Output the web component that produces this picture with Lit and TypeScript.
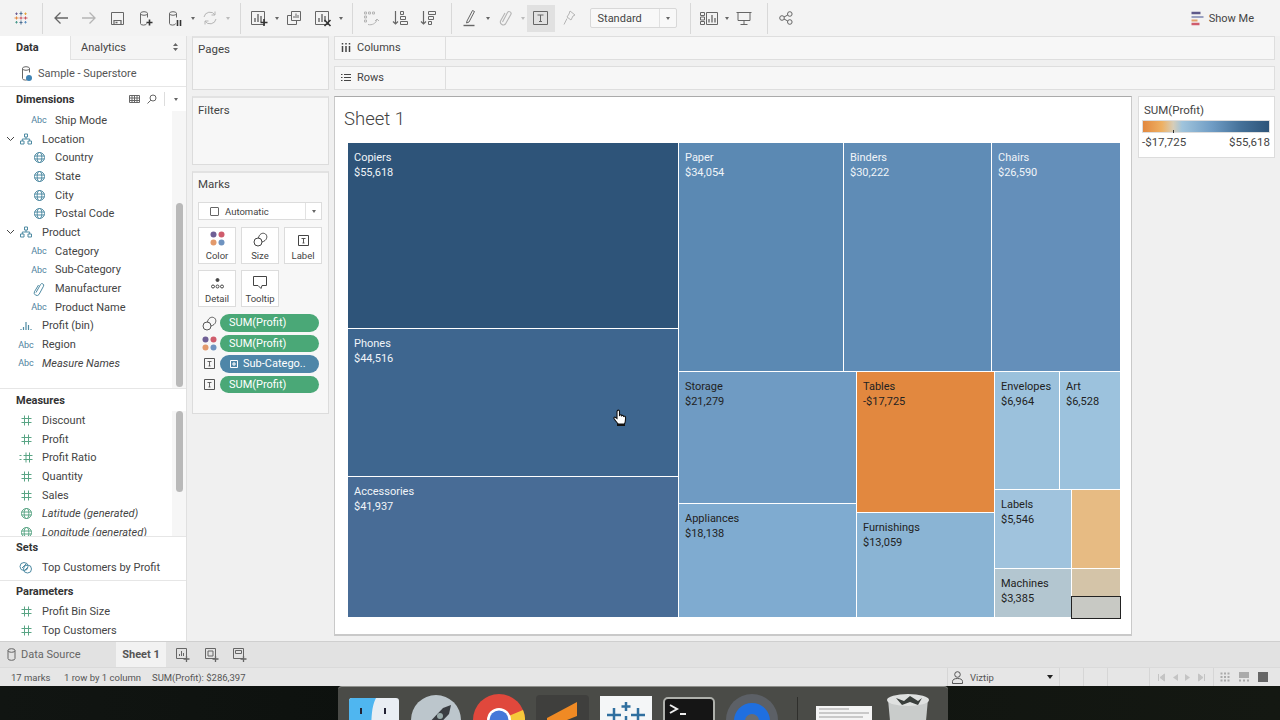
import { LitElement, html, css, nothing, svg } from "lit";
import { customElement } from "lit/decorators.js";

// little svg helper so the icons stay on one line each
const ico = (w: number, h: number, body: unknown, cls = "") =>
  html`<svg class="ico ${cls}" width=${w} height=${h} viewBox="0 0 ${w} ${h}" fill="none" stroke="currentColor" stroke-width="1">${body}</svg>`;

const cyl = svg`<path d="M2.5 3.5v10a3 1.6 0 0 0 6 0M2.5 3.5a3.5 1.8 0 0 1 7 0v4M2.5 3.5a3.5 1.8 0 0 0 7 0"/>`;
const barsBox = svg`<path d="M1.5 2.5h13v13h-13z"/><path d="M5 13V9M8 13V5M11 13V7" stroke-width="1.4"/>`;
const marksDots = svg`<circle cx="3.5" cy="3.5" r="3" fill="#6f5f95" stroke="none"/><circle cx="11.5" cy="3.5" r="3" fill="#cf5c6c" stroke="none"/><circle cx="3.5" cy="11.5" r="3" fill="#e39a6c" stroke="none"/><circle cx="11.5" cy="11.5" r="3" fill="#6f93c0" stroke="none"/>`;
const sizeShape = svg`<circle cx="5" cy="11" r="4"/><path d="M5.5 7C6 3.5 9 1.5 11.5 2.5 14.5 3.6 14.5 7.5 12 9.5 11 10.3 10 10.7 9 11"/>`;
const tBox = svg`<path d="M.5.5h10v10H.5z"/><path d="M3.5 3.5h4M5.5 3.5v4.5M4.5 8h2" stroke-width=".9"/>`;

const toolIcons: Record<string, unknown> = {
  logo: ico(16, 16, svg`<path d="M8 1.5v4M6.5 3.5h3M8 10.500v4M6.500 12.500h3" stroke="#4c6f92"/><path d="M1.500 8h4M3.500 6.500v3" stroke="#e3863c"/><path d="M10.500 8h4M12.500 6.500v3" stroke="#c9505c"/><path d="M3.500 2.500v2.500M2.300 3.700h2.400" stroke="#6d5d93"/><path d="M12.500 2.500v2.500M11.300 3.700h2.400" stroke="#e5a33c"/><path d="M3.500 11v2.500M2.300 12.300h2.400" stroke="#4b9a8c"/><path d="M12.500 11v2.500M11.300 12.300h2.400" stroke="#5c8fc2"/><path d="M8 6.500v3M6.500 8h3" stroke="#c9505c"/>`),
  back: ico(16, 14, svg`<path d="M15 7H2M7.5 1.500 2 7l5.500 5.500" stroke-width="1.3"/>`),
  forward: ico(16, 14, svg`<path d="M1 7h13M8.500 1.500 14 7l-5.500 5.500" stroke-width="1.3"/>`, "off"),
  save: ico(15, 15, svg`<path d="M1.500 1.500h12v12h-12z"/><path d="M4 13.500V9.500h7v4" stroke-width="1.2"/><path d="M5.500 11.500h2" stroke-width="1.5"/>`),
  addData: ico(16, 17, svg`${cyl}<path d="M11.500 9.500v6M8.500 12.500h6" stroke-width="1.6" stroke="#333"/>`),
  pause: ico(16, 17, svg`${cyl}<path d="M10.500 10v6M13.500 10v6" stroke-width="1.6" stroke="#333"/>`),
  refresh: ico(16, 16, svg`<path d="M2 7a6 6 0 0 1 11-2M14 9a6 6 0 0 1-11 2M13 1.500V5H9.500M3 14.500V11h3.500"/>`, "off"),
  newSheet: ico(18, 18, svg`${barsBox}<path d="M14 10v7M10.500 13.500h7" stroke-width="1.6" stroke="#333"/>`),
  dupSheet: ico(16, 16, svg`<path d="M5.500 1.500h9v9h-9zM1.500 5.500h4M1.500 5.500v9h9v-4"/><path d="M8 8V6M10 8V3.500M12 8V5"/>`),
  clearSheet: ico(18, 18, svg`${barsBox}<path d="M10.500 11l6 6M16.500 11l-6 6" stroke-width="1.6" stroke="#333"/>`),
  group: ico(16, 15, svg`<path d="M1.500 1h2v2h-2zM5.500 1h2v2h-2zM9.500 1h2v2h-2zM1.500 5h2v2h-2zM1.500 9h2v2h-2zM5 13.500c4 1 8-1 9-5M12 10l2-2 2 2"/>`, "off"),
  sortAsc: ico(16, 16, svg`<path d="M3.500 1v13M1 11.500 3.500 14 6 11.500" stroke-width="1.2"/><path d="M8.500 1.500h3v3h-3zM8.500 6.500h5v3h-5zM8.500 11.500h7v3h-7z"/>`),
  sortDesc: ico(16, 16, svg`<path d="M3.500 1v13M1 11.500 3.500 14 6 11.500" stroke-width="1.2"/><path d="M8.500 1.500h7v3h-7zM8.500 6.500h5v3h-5zM8.500 11.500h3v3h-3z"/>`),
  pen: ico(14, 18, svg`<path d="M4 12 9.500 1.500l2 1L6 13l-2.500 1z"/><path d="M.5 16.500h11" stroke-width="1.4"/>`),
  clip: ico(13, 16, svg`<path d="M3.500 12 8.500 2.500a1.900 1.900 0 0 1 3.300 2L6.500 14a3 3 0 0 1-5-3L6 3" stroke-width="1.1"/>`, "off"),
  tBig: ico(15, 14, svg`<path d="M.5.500h14v13H.5z"/><path d="M4.500 4h6M7.500 4v6.500M6 10.500h3"/>`),
  pin: ico(13, 16, svg`<path d="M7 1l5 4-2 1-2 4-4-3 2-3zM4 8.500 1 14.500"/>`, "off"),
  cards: ico(18, 13, svg`<path d="M.5.500h4v3h-4zM.5 5h4v3h-4zM.5 9.500h4v3h-4z"/><path d="M6.500.500h11v12h-11z"/><path d="M9 10.500V7M12 10.500V3M15 10.500V6" stroke-width="1.3"/>`),
  present: ico(16, 15, svg`<path d="M.5 1.500h15M2 1.500v8h12v-8M8 9.500v4M4.500 13.500h7"/>`),
  share: ico(14, 14, svg`<circle cx="3" cy="7" r="2.3"/><circle cx="10.800" cy="3" r="2.3"/><circle cx="10.800" cy="11" r="2.3"/><path d="M5 6l3.800-2M5 8l3.800 2"/>`),
};

// field type icons of the data pane
const globe = svg`<circle cx="6.500" cy="6.500" r="5"/><ellipse cx="6.500" cy="6.500" rx="2.300" ry="5"/><path d="M1.500 5h10M1.500 8h10"/>`;
const fieldIcon = (t: string) => {
  if (t === "abc") return html`<span class="abc">Abc</span>`;
  if (t === "globe") return ico(13, 13, globe, "dim");
  if (t === "globeM") return ico(13, 13, globe, "mea");
  if (t === "tree")
    return ico(12, 12, svg`<path d="M4.500 1h3v3h-3zM.5 8h3.500v3H.5zM8 8h3.500v3H8zM6 4v2M2.300 8V6h7.400v2"/>`, "dim");
  if (t === "clip")
    return ico(12, 14, svg`<path d="M3 10.500 7.500 2.500a1.700 1.700 0 0 1 3 1.700L6 12.500a2.700 2.700 0 0 1-4.600-2.700L5.500 3"/>`, "dim");
  if (t === "bin")
    return ico(13, 10, svg`<path d="M1 9v-1M3.500 9V6M6 9V1M8.500 9V4M11 9V8" stroke-width="1.2"/>`, "dim");
  if (t === "set")
    return ico(14, 13, svg`<circle cx="5" cy="5.500" r="4"/><circle cx="8.500" cy="8" r="4"/><path d="M3 7l4-4M6 9l3-3"/>`, "dim");
  if (t === "hashCalc")
    return ico(14, 11, svg`<path d="M7 .5v10M10.500 .5v10M4.500 3.500h9M4.500 7.500h9M.5 3.500h2M.5 7.500h2"/>`, "mea");
  return ico(11, 11, svg`<path d="M3.500 .5v10M7.500 .5v10M.5 3.500h10M.5 7.500h10"/>`, "mea");
};

type Field = { name: string; icon: string; deep?: boolean; open?: boolean; it?: boolean };

const dimensions: Field[] = [
  { name: "Ship Mode", icon: "abc", deep: true },
  { name: "Location", icon: "tree", open: true },
  { name: "Country", icon: "globe", deep: true },
  { name: "State", icon: "globe", deep: true },
  { name: "City", icon: "globe", deep: true },
  { name: "Postal Code", icon: "globe", deep: true },
  { name: "Product", icon: "tree", open: true },
  { name: "Category", icon: "abc", deep: true },
  { name: "Sub-Category", icon: "abc", deep: true },
  { name: "Manufacturer", icon: "clip", deep: true },
  { name: "Product Name", icon: "abc", deep: true },
  { name: "Profit (bin)", icon: "bin" },
  { name: "Region", icon: "abc" },
  { name: "Measure Names", icon: "abc", it: true },
];
const measures: Field[] = [
  { name: "Discount", icon: "hash" },
  { name: "Profit", icon: "hash" },
  { name: "Profit Ratio", icon: "hashCalc" },
  { name: "Quantity", icon: "hash" },
  { name: "Sales", icon: "hash" },
  { name: "Latitude (generated)", icon: "globeM", it: true },
  { name: "Longitude (generated)", icon: "globeM", it: true },
];

// treemap as nested boxes, sizes in px along the parent's direction
type Box = {
  size: number;
  dir?: "row" | "col";
  kids?: Box[];
  name?: string;
  val?: string;
  bg?: string;
  dark?: boolean;
  sel?: boolean;
  hand?: boolean;
};
const leaf = (size: number, bg: string, name?: string, val?: string, dark = false): Box => ({ size, bg, name, val, dark });

const tree: Box = {
  size: 772,
  dir: "row",
  kids: [
    {
      size: 330,
      dir: "col",
      kids: [
        leaf(185, "#2e5479", "Copiers", "$55,618"),
        { ...leaf(147, "#3e668f", "Phones", "$44,516"), hand: true },
        leaf(140, "#486c96", "Accessories", "$41,937"),
      ],
    },
    {
      size: 441,
      dir: "col",
      kids: [
        {
          size: 228,
          dir: "row",
          kids: [
            leaf(164, "#5b89b3", "Paper", "$34,054"),
            leaf(147, "#5f8cb6", "Binders", "$30,222"),
            leaf(128, "#648fba", "Chairs", "$26,590"),
          ],
        },
        {
          size: 245,
          dir: "row",
          kids: [
            {
              size: 177,
              dir: "col",
              kids: [
                leaf(131, "#6f9bc3", "Storage", "$21,279", true),
                leaf(113, "#7fabd0", "Appliances", "$18,138", true),
              ],
            },
            {
              size: 137,
              dir: "col",
              kids: [
                leaf(140, "#e2883f", "Tables", "-$17,725", true),
                leaf(104, "#8ab4d4", "Furnishings", "$13,059", true),
              ],
            },
            {
              size: 125,
              dir: "col",
              kids: [
                {
                  size: 117,
                  dir: "row",
                  kids: [
                    leaf(64, "#9bc1dc", "Envelopes", "$6,964", true),
                    leaf(60, "#9cc2dd", "Art", "$6,528", true),
                  ],
                },
                {
                  size: 127,
                  dir: "row",
                  kids: [
                    {
                      size: 76,
                      dir: "col",
                      kids: [
                        leaf(78, "#a0c3dd", "Labels", "$5,546", true),
                        leaf(48, "#b3c6d0", "Machines", "$3,385", true),
                      ],
                    },
                    {
                      size: 48,
                      dir: "col",
                      kids: [
                        leaf(78, "#e7bb83"),
                        leaf(27, "#d4c4a8"),
                        { ...leaf(21, "#c8c9c4"), sel: true },
                      ],
                    },
                  ],
                },
              ],
            },
          ],
        },
      ],
    },
  ],
};

const handCursor = html`<svg class="hand" width="14" height="18" viewBox="0 0 14 18"><path d="M4.500 1.500c.8-.8 2-.3 2 .8V7l.3-1c.9-.6 1.800-.2 1.900.7.700-.7 1.800-.3 1.900.7.800-.5 1.800 0 1.900 1 .2 2.500-.2 5-1.200 7.100H5.500C4 13.500 2.200 11.500 1 9.500c-.5-.9.500-1.800 1.300-1.200L4 9.500V2.500z" fill="#fff" stroke="#111" stroke-width="1.1"/><path d="M4 14.500h8V17H4z" fill="#111"/></svg>`;

@customElement("app-root")
export class AppRoot extends LitElement {
  static styles = css`
    :host {
      display: block;
      width: 1280px;
      height: 720px;
      overflow: hidden;
      font-family: Roboto, "Liberation Sans", sans-serif;
      font-size: 11px;
      color: #444;
    }
    .app {
      display: flex;
      flex-direction: column;
      height: 720px;
      background: #f0f0f0;
    }
    .ico {
      display: block;
      flex: none;
      overflow: visible;
    }

    /* toolbar */
    .toolbar {
      display: flex;
      align-items: center;
      height: 36px;
      flex: none;
      padding-left: 7px;
      background: #f3f3f3;
      color: #666;
    }
    .tb {
      width: 28.5px;
      height: 27px;
      flex: none;
      display: flex;
      align-items: center;
      justify-content: center;
    }
    .tb .off {
      color: #b5b5b5;
    }
    .tb.on {
      background: #e1e1e1;
    }
    .caret {
      width: 7px;
      flex: none;
      display: flex;
      justify-content: center;
    }
    .caret i {
      width: 0;
      height: 0;
      border: 2.5px solid transparent;
      border-top: 3px solid #666;
      border-bottom: 0;
    }
    .caret.off i {
      border-top-color: #bbb;
    }
    .sep {
      width: 1px;
      height: 31px;
      flex: none;
      background: #d8d8d8;
      margin: 0 4px 0 8px;
    }
    .sep.first {
      margin-left: 6px;
    }
    .std {
      width: 87px;
      height: 20px;
      box-sizing: border-box;
      margin: 0 5px 0 6px;
      display: flex;
      align-items: center;
      flex: none;
      border: 1px solid #d8d8d8;
      border-radius: 2px;
      background: #f8f8f8;
      color: #444;
    }
    .std span {
      flex: 1;
      padding-left: 7px;
    }
    .std .caret {
      width: 16px;
      height: 18px;
      align-items: center;
      border-left: 1px solid #e0e0e0;
    }
    .showme {
      margin-left: auto;
      margin-right: 26px;
      display: flex;
      align-items: center;
      gap: 5px;
      color: #444;
    }

    /* main columns */
    .main {
      flex: 1;
      min-height: 0;
      display: flex;
    }
    .data {
      width: 187px;
      flex: none;
      display: flex;
      flex-direction: column;
      background: #fff;
      border-right: 1px solid #e0e0e0;
      box-sizing: border-box;
    }
    .tabs {
      display: flex;
      height: 24px;
      flex: none;
    }
    .tab-data {
      width: 70px;
      font-weight: 700;
      padding: 5px 0 0 16px;
      box-sizing: border-box;
      color: #333;
    }
    .tab-an {
      flex: 1;
      display: flex;
      justify-content: space-between;
      align-items: center;
      background: #f5f5f5;
      border-left: 1px solid #e2e2e2;
      border-bottom: 1px solid #e2e2e2;
      padding: 0 8px 1px 10px;
    }
    .source {
      height: 27px;
      flex: none;
      box-sizing: border-box;
      display: flex;
      align-items: center;
      gap: 7px;
      padding-left: 20px;
      border-bottom: 1px solid #e6e6e6;
      color: #555;
    }
    .source svg {
      color: #666;
    }
    .src-ico {
      position: relative;
    }
    .src-ico b {
      position: absolute;
      right: -1px;
      bottom: 0;
      width: 6px;
      height: 6px;
      border-radius: 50%;
      background: #3f84b5;
    }
    .sec-head {
      display: flex;
      align-items: center;
      font-weight: 700;
      color: #333;
      padding-left: 16px;
      flex: none;
    }
    .dims-head {
      height: 24px;
    }
    .dims-tools {
      margin-left: auto;
      display: flex;
      align-items: center;
      gap: 7px;
      color: #666;
      padding-right: 7px;
    }
    .dims-tools u {
      width: 1px;
      height: 14px;
      background: #ddd;
    }
    .listwrap {
      display: flex;
      overflow: hidden;
      flex: none;
    }
    .dimwrap {
      height: 277px;
      border-bottom: 1px solid #e6e6e6;
    }
    .meawrap {
      height: 125px;
      border-bottom: 1px solid #e6e6e6;
    }
    .list {
      flex: 1;
      min-width: 0;
    }
    .track {
      width: 14px;
      flex: none;
      background: #f6f6f6;
      display: flex;
      justify-content: center;
    }
    .thumb {
      width: 7px;
      border-radius: 4px;
      background: #b9b9b9;
    }
    .dimwrap .thumb {
      height: 184px;
      margin-top: 92px;
    }
    .meawrap .thumb {
      height: 81px;
    }
    .row {
      height: 18.7px;
      display: flex;
      align-items: center;
      white-space: nowrap;
      color: #444;
    }
    .row .chev {
      width: 9px;
      margin-left: 6px;
      flex: none;
    }
    .row .slot {
      width: 22px;
      flex: none;
      display: flex;
      justify-content: center;
      margin-left: 15px;
      margin-right: 5px;
    }
    .row.deep .slot {
      margin-left: 28px;
    }
    .row.hier .slot {
      margin-left: 0;
    }
    .it {
      font-style: italic;
    }
    .abc {
      font-size: 9px;
      color: #4f7f9e;
    }
    .dim {
      color: #4f8ba3;
    }
    .mea {
      color: #5aa585;
    }
    .measures-head {
      height: 22px;
    }
    .head-tall {
      height: 21px;
    }
    .set-sec {
      height: 44px;
      flex: none;
      border-bottom: 1px solid #e6e6e6;
      box-sizing: border-box;
    }
    .par-sec {
      flex: 1;
      min-height: 0;
    }

    /* shelves column */
    .side {
      width: 137px;
      margin-left: 5px;
      flex: none;
      display: flex;
      flex-direction: column;
      gap: 6px;
    }
    .card {
      background: #f7f7f7;
      border: 1px solid #dcdcdc;
      border-top: 2px solid #e2e2e2;
      box-sizing: border-box;
    }
    .card h4 {
      margin: 0;
      font-weight: 400;
      color: #444;
      font-size: 11.5px;
      line-height: 15px;
    }
    .pages {
      height: 54px;
      padding: 4px 5px;
    }
    .filters {
      height: 69px;
      padding: 5px 5px;
    }
    .marks {
      height: 243px;
      padding: 4px 5px;
    }
    .mark-type {
      display: flex;
      align-items: center;
      height: 18px;
      box-sizing: border-box;
      width: 124px;
      margin-top: 10px;
      border: 1px solid #dcdcdc;
      background: #fff;
      font-size: 9.5px;
    }
    .mark-type span {
      flex: 1;
      display: flex;
      align-items: center;
      gap: 6px;
      padding-left: 11px;
    }
    .mark-type b {
      width: 9px;
      height: 9px;
      border: 1px solid #666;
      box-sizing: border-box;
      border-radius: 1px;
    }
    .mark-type .caret {
      width: 15px;
      height: 16px;
      align-items: center;
      border-left: 1px solid #e2e2e2;
    }
    .mark-btns {
      display: grid;
      grid-template-columns: 38px 38px 38px;
      gap: 6px 5px;
      margin-top: 7px;
    }
    .mbtn {
      height: 37px;
      background: #fff;
      border: 1px solid #dcdcdc;
      box-sizing: border-box;
      display: flex;
      flex-direction: column;
      align-items: center;
      justify-content: flex-end;
      gap: 4px;
      padding-bottom: 2px;
      font-size: 9.5px;
      color: #444;
    }
    .pills {
      display: flex;
      flex-direction: column;
      gap: 3px;
      margin-top: 7px;
    }
    .pill-row {
      display: flex;
      align-items: center;
      height: 17.5px;
      gap: 3px;
    }
    .pill-ico {
      width: 19px;
      display: flex;
      justify-content: center;
      padding-left: 3px;
      box-sizing: border-box;
      flex: none;
      color: #555;
    }
    .pill {
      width: 99px;
      height: 17.5px;
      box-sizing: border-box;
      border-radius: 9px;
      color: #fff;
      padding-left: 9px;
      display: flex;
      align-items: center;
      gap: 5px;
      background: #4aa877;
    }
    .pill.blue {
      background: #4e86a8;
      padding-left: 10px;
    }
    .pill.blue svg {
      color: #fff;
    }

    /* view */
    .view {
      flex: 1;
      margin: 0 5px;
      min-width: 0;
      display: flex;
      flex-direction: column;
      gap: 6px;
    }
    .shelf {
      height: 24px;
      display: flex;
      flex: none;
      background: #f7f7f7;
      border: 1px solid #dedede;
      box-sizing: border-box;
    }
    .shelf-name {
      width: 111px;
      box-sizing: border-box;
      border-right: 1px solid #dedede;
      display: flex;
      align-items: center;
      gap: 6px;
      padding: 0 0 1px 6px;
    }
    .stage {
      flex: 1;
      display: flex;
      gap: 6px;
      min-height: 0;
    }
    .sheet {
      width: 798px;
      height: 540px;
      flex: none;
      background: #fff;
      border: 1px solid #c9c9c9;
      border-top-color: #aaa;
      border-bottom-width: 2px;
      box-sizing: border-box;
      padding: 0 11px 0 13px;
    }
    .sheet h1 {
      margin: 0 0 0 -4px;
      height: 46px;
      padding-top: 10px;
      box-sizing: border-box;
      font-weight: 300;
      font-size: 18.5px;
      color: #444;
      line-height: 24px;
    }
    .legend {
      width: 137px;
      height: 62px;
      background: #fff;
      border: 1px solid #dcdcdc;
      box-sizing: border-box;
      padding: 6px 4px 0 3px;
    }
    .legend h4 {
      margin: 0 0 0 2px;
      font-weight: 400;
      font-size: 11.5px;
      line-height: 14px;
    }
    .ramp {
      height: 13px;
      margin-top: 3px;
      position: relative;
      background: linear-gradient(90deg, #e2883f 0, #eeb063 15%, #d6cdb8 24%, #a0c4dc 31%, #6f9cc4 55%, #447098 78%, #2d5479 100%);
      border: 1px solid #ddd;
      box-sizing: border-box;
    }
    .ramp i {
      position: absolute;
      left: 30px;
      bottom: -1px;
      width: 1px;
      height: 3px;
      background: #333;
    }
    .ramp-vals {
      display: flex;
      justify-content: space-between;
      margin-top: 2px;
      line-height: 15px;
      color: #444;
      font-size: 11.5px;
    }

    /* treemap */
    .t-row,
    .t-col {
      display: flex;
      gap: 1px;
      flex: none;
    }
    .t-col {
      flex-direction: column;
    }
    .leaf {
      flex: none;
      box-sizing: border-box;
      padding: 7px 0 0 6px;
      line-height: 15px;
      color: #f0f4f8;
      font-size: 11px;
      position: relative;
      white-space: nowrap;
    }
    .leaf.dark {
      color: #222;
    }
    .leaf.sel {
      outline: 1px solid #222;
      z-index: 1;
    }
    .leaf .hand {
      position: absolute;
      left: 265px;
      top: 80px;
    }

    /* bottom bars */
    .tabbar {
      height: 26px;
      flex: none;
      display: flex;
      align-items: center;
      background: #e2e2e2;
      border-top: 1px solid #cfcfcf;
      box-sizing: border-box;
      color: #666;
    }
    .ds {
      width: 116px;
      display: flex;
      align-items: center;
      gap: 5px;
      padding-left: 7px;
      box-sizing: border-box;
    }
    .s1 {
      width: 50px;
      height: 100%;
      background: #f2f2f2;
      font-weight: 700;
      color: #555;
      display: flex;
      align-items: center;
      justify-content: center;
    }
    .tabadd {
      width: 28.5px;
      display: flex;
      justify-content: center;
      color: #666;
    }
    .tabgap {
      width: 3px;
    }
    .status {
      height: 19px;
      flex: none;
      display: flex;
      align-items: center;
      background: #e6e6e6;
      border-top: 1px solid #dadada;
      box-sizing: border-box;
      font-size: 9.5px;
      color: #555;
      padding-left: 11px;
    }
    .status .a {
      width: 53px;
    }
    .status .b {
      width: 88px;
    }
    .status .c {
      width: 795px;
    }
    .stat-cell {
      height: 100%;
      border-left: 1px solid #d6d6d6;
      box-sizing: border-box;
      flex: none;
    }
    .viz {
      width: 112px;
      display: flex;
      align-items: center;
      gap: 7px;
      padding-left: 4px;
    }
    .viz .caret {
      margin-left: auto;
      margin-right: 6px;
    }
    .viz .caret i {
      border-top-color: #222;
      border-width: 3.5px;
      border-top-width: 4px;
      border-bottom: 0;
    }
    .narrow {
      width: 24px;
    }
    .wide {
      width: 42px;
    }
    .navs {
      width: 64px;
      display: flex;
      align-items: center;
      justify-content: space-between;
      padding: 0 8px;
      color: #c4c4c4;
    }
    .views {
      flex: 1;
      display: flex;
      align-items: center;
      gap: 9px;
      padding-left: 6px;
    }

    /* desktop with the dock */
    .desktop {
      height: 34px;
      flex: none;
      display: flex;
      justify-content: center;
      padding-left: 6px;
      overflow: hidden;
      background: linear-gradient(90deg, #111512, #0d110e 30%, #141812 100%);
    }
    .dock {
      width: 610px;
      height: 34px;
      flex: none;
      box-sizing: border-box;
      background: #4a4b47;
      border-top: 1px solid #8f908c;
      border-radius: 4px 4px 0 0;
      display: flex;
      align-items: flex-start;
      padding-left: 11px;
      gap: 11px;
      overflow: hidden;
    }
    .dock svg {
      flex: none;
      margin-top: 7px;
    }
    .dock .term {
      margin-top: 10px;
    }
    .dock .doc {
      margin-top: 19px;
    }
    .dock .trash {
      margin: 6px 0 0 3px;
    }
    .dock-sep {
      width: 1px;
      height: 24px;
      margin: 10px 7px 0 8px;
      background: #2f2f2c;
      flex: none;
    }
  `;

  tool(name: string, on = false) {
    return html`<div class="tb ${on ? "on" : ""}">${toolIcons[name]}</div>`;
  }
  caret(off = false) {
    return html`<div class="caret ${off ? "off" : ""}"><i></i></div>`;
  }
  renderRow(f: Field) {
    const chev = f.open ? ico(9, 6, svg`<path d="M1 1l3.500 3.500L8 1"/>`, "chev") : nothing;
    const cls = f.deep ? "deep" : f.open ? "hier" : "top";
    return html`<div class="row ${cls}">
      ${chev}
      <span class="slot">${fieldIcon(f.icon)}</span>
      <span class=${f.it ? "it" : ""}>${f.name}</span>
    </div>`;
  }
  renderBox(b: Box, parent: string): unknown {
    const dim = parent === "row" ? "width" : "height";
    if (b.kids) {
      return html`<div class=${b.dir === "row" ? "t-row" : "t-col"} style="${dim}:${b.size}px">
        ${b.kids.map((k) => this.renderBox(k, b.dir!))}
      </div>`;
    }
    return html`<div
      class="leaf ${b.dark ? "dark" : ""} ${b.sel ? "sel" : ""}"
      style="${dim}:${b.size}px;background:${b.bg}"
    >
      ${b.name ? html`${b.name}<br />${b.val}` : nothing}${b.hand ? handCursor : nothing}
    </div>`;
  }
  mark(label: string, icon: unknown) {
    return html`<div class="mbtn">${icon}<span>${label}</span></div>`;
  }
  pill(icon: unknown, label: string, blue = false) {
    return html`<div class="pill-row">
      <span class="pill-ico">${icon}</span>
      <div class="pill ${blue ? "blue" : ""}">
        ${blue ? ico(8, 8, svg`<path d="M.5.500h7v7h-7zM4 2v4M2 4h4"/>`) : nothing}${label}
      </div>
    </div>`;
  }

  renderToolbar() {
    return html`<div class="toolbar">
      ${this.tool("logo")}<div class="sep first"></div>
      ${this.tool("back")}${this.tool("forward")}${this.tool("save")}${this.tool("addData")}${this.tool("pause")}
      ${this.caret()}${this.tool("refresh")}${this.caret(true)}
      <div class="sep"></div>
      ${this.tool("newSheet")}${this.caret()}${this.tool("dupSheet")}${this.tool("clearSheet")}${this.caret()}
      <div class="sep"></div>
      ${this.tool("group")}${this.tool("sortAsc")}${this.tool("sortDesc")}
      <div class="sep"></div>
      ${this.tool("pen")}${this.caret()}${this.tool("clip")}${this.caret(true)}${this.tool("tBig", true)}${this.tool("pin")}
      <div class="std"><span>Standard</span>${this.caret()}</div>
      <div class="sep"></div>
      ${this.tool("cards")}${this.caret()}${this.tool("present")}
      <div class="sep"></div>
      ${this.tool("share")}
      <div class="showme">
        ${ico(13, 15, svg`<path d="M.5 2h9" stroke="#5f5a8a" stroke-width="2.5"/><path d="M.5 6h12" stroke="#7c86b0" stroke-width="1.5"/><path d="M.5 9.500h6" stroke="#e3a06a" stroke-width="2"/><path d="M.5 13h8" stroke="#cf5c6c" stroke-width="2.5"/>`)}
        <span>Show Me</span>
      </div>
    </div>`;
  }

  renderData() {
    return html`<div class="data">
      <div class="tabs">
        <div class="tab-data">Data</div>
        <div class="tab-an">
          <span>Analytics</span>
          ${ico(5, 8, svg`<path d="M2.500 0 5 3H0zM2.500 8 0 5h5z" fill="#666" stroke="none"/>`)}
        </div>
      </div>
      <div class="source">
        <span class="src-ico">${ico(11, 16, cyl)}<b></b></span>
        <span>Sample - Superstore</span>
      </div>
      <div class="sec-head dims-head">
        Dimensions
        <div class="dims-tools">
          ${ico(11, 8, svg`<path d="M.5.500h10v7H.5zM.5 3h10M.5 5.500h10M3 .5v7M5.500 .5v7M8 .5v7"/>`)}
          ${ico(10, 10, svg`<circle cx="6" cy="4" r="3"/><path d="M3.800 6.200.5 9.500"/>`)}
          <u></u>${this.caret()}
        </div>
      </div>
      <div class="listwrap dimwrap">
        <div class="list">${dimensions.map((f) => this.renderRow(f))}</div>
        <div class="track"><div class="thumb"></div></div>
      </div>
      <div class="sec-head measures-head">Measures</div>
      <div class="listwrap meawrap">
        <div class="list">${measures.map((f) => this.renderRow(f))}</div>
        <div class="track"><div class="thumb"></div></div>
      </div>
      <div class="set-sec">
        <div class="sec-head head-tall">Sets</div>
        ${this.renderRow({ name: "Top Customers by Profit", icon: "set" })}
      </div>
      <div class="par-sec">
        <div class="sec-head head-tall">Parameters</div>
        ${this.renderRow({ name: "Profit Bin Size", icon: "hash" })}
        ${this.renderRow({ name: "Top Customers", icon: "hash" })}
      </div>
    </div>`;
  }

  renderSide() {
    const tSmall = ico(11, 11, tBox);
    const dots = ico(15, 15, marksDots);
    const size = ico(15, 15, sizeShape);
    return html`<div class="side">
      <div class="card pages"><h4>Pages</h4></div>
      <div class="card filters"><h4>Filters</h4></div>
      <div class="card marks">
        <h4>Marks</h4>
        <div class="mark-type"><span><b></b>Automatic</span>${this.caret()}</div>
        <div class="mark-btns">
          ${this.mark("Color", dots)} ${this.mark("Size", size)} ${this.mark("Label", tSmall)}
          ${this.mark("Detail", ico(13, 11, svg`<circle cx="6.500" cy="2" r="1.500" fill="currentColor"/><circle cx="2" cy="8.500" r="1.500"/><circle cx="6.500" cy="8.500" r="1.500"/><circle cx="11" cy="8.500" r="1.500"/>`))}
          ${this.mark("Tooltip", ico(14, 13, svg`<path d="M.5.500h13v9H9l-1 3-3-3H.5z"/>`))}
        </div>
        <div class="pills">
          ${this.pill(size, "SUM(Profit)")}
          ${this.pill(dots, "SUM(Profit)")}
          ${this.pill(tSmall, "Sub-Catego..", true)}
          ${this.pill(tSmall, "SUM(Profit)")}
        </div>
      </div>
    </div>`;
  }

  renderView() {
    return html`<div class="view">
      <div class="shelf">
        <div class="shelf-name">
          ${ico(10, 9, svg`<path d="M1.500 3v6M5 3v6M8.500 3v6" stroke-width="1.5"/><path d="M1.500 0v1.500M5 0v1.500M8.500 0v1.500" stroke-width="1.5"/>`)}
          Columns
        </div>
      </div>
      <div class="shelf">
        <div class="shelf-name">
          ${ico(10, 9, svg`<path d="M3 1.500h7M3 4.500h7M3 7.500h7M0 1.500h1.500M0 4.500h1.500M0 7.500h1.500"/>`)}
          Rows
        </div>
      </div>
      <div class="stage">
        <div class="sheet">
          <h1>Sheet 1</h1>
          ${this.renderBox(tree, "root")}
        </div>
        <div class="legend">
          <h4>SUM(Profit)</h4>
          <div class="ramp"><i></i></div>
          <div class="ramp-vals"><span>-$17,725</span><span>$55,618</span></div>
        </div>
      </div>
    </div>`;
  }

  renderBottom() {
    const add = (mark: unknown) =>
      html`<div class="tabadd">${ico(14, 14, svg`<path d="M.5.500h10v10H.5z"/>${mark}`)}</div>`;
    const plus = svg`<path d="M10.500 8v6M7.500 11h6" stroke-width="1.3"/>`;
    return html`<div class="tabbar">
        <div class="ds">${ico(9, 13, svg`<path d="M1 2.500v8a3.500 1.800 0 0 0 7 0v-8a3.500 1.800 0 0 0-7 0 3.500 1.800 0 0 0 7 0"/>`)}Data Source</div>
        <div class="s1">Sheet 1</div>
        <div class="tabgap"></div>
        ${add(svg`<path d="M3.500 8V6M5.500 8V3M7.500 8V5"/>${plus}`)}
        ${add(svg`<path d="M3 3h5v5H3z"/>${plus}`)}
        ${add(svg`<path d="M2.500 2.500h6v3h-6z"/>${plus}`)}
      </div>
      <div class="status">
        <span class="a">17 marks</span>
        <span class="b">1 row by 1 column</span>
        <span class="c">SUM(Profit): $286,397</span>
        <div class="stat-cell viz">
          ${ico(11, 13, svg`<circle cx="5.500" cy="3.500" r="2.800"/><path d="M.5 12.500v-2c0-2 2-3 5-3s5 1 5 3v2z"/>`)}
          <span>Viztip</span>${this.caret()}
        </div>
        <div class="stat-cell narrow"></div>
        <div class="stat-cell narrow"></div>
        <div class="stat-cell wide"></div>
        <div class="stat-cell navs">
          ${ico(7, 7, svg`<path d="M6.500 0v7L2 3.500zM.5 0v7" fill="currentColor"/>`)}
          ${ico(5, 7, svg`<path d="M5 0v7L0 3.500z" fill="currentColor" stroke="none"/>`)}
          ${ico(5, 7, svg`<path d="M0 0v7l5-3.500z" fill="currentColor" stroke="none"/>`)}
          ${ico(7, 7, svg`<path d="M.5 0v7L5 3.500zM6.500 0v7" fill="currentColor"/>`)}
        </div>
        <div class="stat-cell views">
          ${ico(10, 10, svg`<path d="M.5 1.500h2M4 1.500h2M7.500 1.500h2M.5 5h2M4 5h2M7.500 5h2M.5 8.500h2M4 8.500h2M7.500 8.500h2" stroke="#aaa" stroke-width="2"/>`)}
          ${ico(10, 10, svg`<path d="M0 0h10v6H0z" fill="#aaa" stroke="none"/><path d="M0 8.500h2M4 8.500h2M8 8.500h2" stroke="#aaa" stroke-width="2"/>`)}
          ${ico(10, 10, svg`<path d="M0 0h10v10H0z" fill="#666" stroke="none"/>`)}
        </div>
      </div>`;
  }

  renderDock() {
    return html`<div class="desktop">
      <div class="dock">
        <svg width="50" height="50" viewBox="0 0 50 50"><rect y="4" width="50" height="46" rx="3" fill="#e9eef3"/><path d="M3 4h24c-4 8-5 16-5 46H3a3 3 0 0 1-3-3V7a3 3 0 0 1 3-3z" fill="#4fb6f0"/><path d="M12 14v6M36 14v6" stroke="#223" stroke-width="2"/></svg>
        <svg width="52" height="50" viewBox="0 0 52 50"><circle cx="26" cy="26" r="25" fill="#bcc6cc"/><path d="M14 34 33 14l8-3-2 9-18 19z" fill="#3a3d42"/><circle cx="30" cy="22" r="3" fill="#9aa"/></svg>
        <svg width="52" height="50" viewBox="0 0 52 50"><circle cx="26" cy="26" r="26" fill="#e0483c"/><path d="M26 26 50 16a26 26 0 0 1-10 32z" fill="#f6c93b"/><path d="M26 26 0 28a26 26 0 0 0 20 24z" fill="#3aa757"/><circle cx="26" cy="26" r="12" fill="#fff"/><circle cx="26" cy="26" r="9.500" fill="#4678d8"/></svg>
        <svg width="53" height="50" viewBox="0 0 53 50"><rect y="1" width="53" height="49" rx="4" fill="#3f3f3d"/><path d="M11 24 41 8v14L21 30l20 8v12H11V36l10-6-10-4z" fill="#f08a24"/></svg>
        <svg width="52" height="50" viewBox="0 0 52 50"><rect y="2" width="52" height="48" fill="#f4f6f7"/><g stroke="#2f6f9f" stroke-width="2.5"><path d="M26 8v9M21.500 12.500h9M14 14v14M7 21h14M38 14v14M31 21h14M26 22v22"/></g></svg>
        <svg class="term" width="52" height="50" viewBox="0 0 52 50"><rect x="1" y="1" width="50" height="48" rx="4" fill="#151515" stroke="#aeb0ab" stroke-width="2"/><path d="M7 8l7 4-7 4M17 17h6" stroke="#eee" stroke-width="2" fill="none"/></svg>
        <svg width="52" height="50" viewBox="0 0 52 50"><circle cx="26" cy="26" r="26" fill="#5c6066"/><circle cx="26" cy="27" r="18" fill="#1f6fe0"/><circle cx="26" cy="27" r="7" fill="#6a6d72"/></svg>
        <div class="dock-sep"></div>
        <svg class="doc" width="56" height="50" viewBox="0 0 56 50"><rect width="56" height="50" fill="#f4f4f4"/><path d="M3 3h30M3 7h50M3 11h44" stroke="#bbb" stroke-width="1.5"/></svg>
        <svg class="trash" width="44" height="50" viewBox="0 0 44 50"><path d="M2 6 42 6 38 50H6z" fill="#c9cccb"/><ellipse cx="22" cy="7" rx="21" ry="6" fill="#dfe1e0"/><path d="M10 5l8 3 6-5 8 5 4-3-4 7-8-3-8 3z" fill="#3a3f3c"/></svg>
      </div>
    </div>`;
  }

  render() {
    return html`<div class="app">
      ${this.renderToolbar()}
      <div class="main">${this.renderData()} ${this.renderSide()} ${this.renderView()}</div>
      ${this.renderBottom()} ${this.renderDock()}
    </div>`;
  }
}
